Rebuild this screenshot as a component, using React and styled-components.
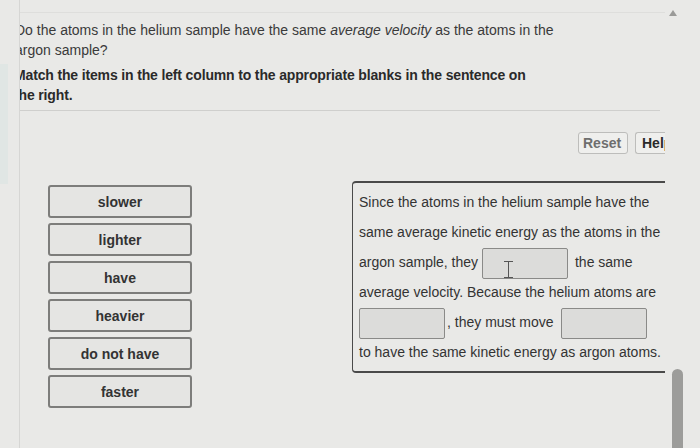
import styled, { createGlobalStyle } from 'styled-components';

const GlobalStyle = createGlobalStyle`
  html, body {
    margin: 0;
    padding: 0;
    background-color: #e9e9e7;
  }
  * {
    box-sizing: border-box;
  }
`;

const Screen = styled.div`
  position: relative;
  display: flex;
  width: 700px;
  height: 448px;
  overflow: hidden;
  background-color: #e9e9e7;
  font-family: 'Liberation Sans', Arial, sans-serif;
  color: #333333;
`;

const Gutter = styled.div`
  position: relative;
  width: 20px;
  flex-shrink: 0;
  border-right: 1px solid #d6d6d4;

  &::before {
    content: '';
    position: absolute;
    left: 0;
    top: 64px;
    width: 8px;
    height: 120px;
    background-color: #e0e6e4;
  }
`;

const Content = styled.div`
  display: flex;
  flex-direction: column;
  width: 645px;
  overflow: hidden;
  padding-top: 12px;
`;

const TopRule = styled.div`
  height: 1px;
  background-color: #dededc;
  margin-bottom: 7px;
`;

const Question = styled.p`
  margin: 0 0 5px -5px;
  width: 560px;
  font-size: 14px;
  line-height: 20px;
  color: #3a3a3a;

  em {
    font-style: italic;
  }
`;

const Instruction = styled.p`
  margin: 0 0 5px -6px;
  width: 535px;
  font-size: 14px;
  font-weight: 700;
  line-height: 20px;
  color: #2a2a2a;
  letter-spacing: -0.15px;
`;

const Divider = styled.div`
  width: 640px;
  height: 1px;
  background-color: #cfcfcd;
`;

const Toolbar = styled.div`
  display: flex;
  justify-content: flex-end;
  gap: 7px;
  margin-top: 21px;
`;

const ToolButton = styled.button`
  height: 22px;
  padding: 0 0 0 ${(p) => (p.$cut ? '6px' : '4px')};
  width: ${(p) => p.$width}px;
  overflow: hidden;
  white-space: nowrap;
  text-align: left;
  font-family: inherit;
  font-size: 14px;
  font-weight: 700;
  color: ${(p) => (p.$muted ? '#6e6e6e' : '#2a2a2a')};
  background-color: #efefed;
  border: 1px solid #bdbdbb;
  border-right: ${(p) => (p.$cut ? 'none' : '1px solid #bdbdbb')};
  border-radius: ${(p) => (p.$cut ? '3px 0 0 3px' : '3px')};
`;

const Body = styled.div`
  display: flex;
  align-items: flex-start;
  gap: 160px;
  margin-top: 27px;
  padding-left: 28px;
`;

const TileColumn = styled.div`
  display: flex;
  flex-direction: column;
  gap: 5px;
  margin-top: 4px;
`;

const Tile = styled.div`
  display: flex;
  align-items: center;
  justify-content: center;
  width: 144px;
  height: 33px;
  background-color: #e5e5e3;
  border: 2px solid #7d7d7b;
  border-radius: 3px;
  font-size: 14px;
  font-weight: 700;
  color: #333333;
`;

const SentencePanel = styled.div`
  width: 315px;
  padding: 4px 0 4px 6px;
  border-top: 2px solid #4a4a4a;
  border-left: 1px solid #4a4a4a;
  border-bottom: 2px solid #4a4a4a;
  border-top-left-radius: 4px;
  border-bottom-left-radius: 4px;
  font-size: 14px;
  line-height: 30px;
  color: #333333;
`;

const Blank = styled.span`
  position: relative;
  display: inline-block;
  vertical-align: middle;
  width: 86px;
  height: 31px;
  margin: -2px ${(p) => p.$right || 0}px -2px ${(p) => p.$left || 0}px;
  background-color: #dcdcda;
  border: 1px solid #8a8a88;
  border-radius: 2px;
`;

const Cursor = styled.span`
  position: absolute;
  left: 21px;
  top: 12px;
  width: 9px;
  height: 17px;
  border-top: 1px solid #555;
  border-bottom: 1px solid #555;

  &::after {
    content: '';
    position: absolute;
    left: 4px;
    top: 0;
    width: 1px;
    height: 15px;
    background-color: #555;
  }
`;

const ScrollArrow = styled.div`
  position: absolute;
  left: 669px;
  top: 10px;
  width: 0;
  height: 0;
  border-left: 4px solid transparent;
  border-right: 4px solid transparent;
  border-bottom: 6px solid #9a9a98;
`;

const ScrollThumb = styled.div`
  position: absolute;
  left: 672px;
  top: 369px;
  width: 11px;
  height: 100px;
  background-color: #9c9c9a;
  border-radius: 6px;
`;

const tiles = ['slower', 'lighter', 'have', 'heavier', 'do not have', 'faster'];

function App() {
  return (
    <>
      <GlobalStyle />
      <Screen>
        <Gutter />
        <Content>
          <TopRule />
          <Question>
            Do the atoms in the helium sample have the same <em>average velocity</em> as the atoms in the
            argon sample?
          </Question>
          <Instruction>
            Match the items in the left column to the appropriate blanks in the sentence on the right.
          </Instruction>
          <Divider />
          <Toolbar>
            <ToolButton $muted $width={50}>Reset</ToolButton>
            <ToolButton $cut $width={30}>Help</ToolButton>
          </Toolbar>
          <Body>
            <TileColumn>
              {tiles.map((t) => (
                <Tile key={t}>{t}</Tile>
              ))}
            </TileColumn>
            <SentencePanel>
              Since the atoms in the helium sample have the same average kinetic energy as the atoms in the
              argon sample, they{' '}
              <Blank $right={7}>
                <Cursor />
              </Blank>
              the same average velocity. Because the helium atoms are{' '}
              <Blank $right={2} />
              , they must move{' '}
              <Blank $left={4} $right={10} /> to have the same kinetic energy as argon atoms.
            </SentencePanel>
          </Body>
        </Content>
        <ScrollArrow />
        <ScrollThumb />
      </Screen>
    </>
  );
}

export default App;
